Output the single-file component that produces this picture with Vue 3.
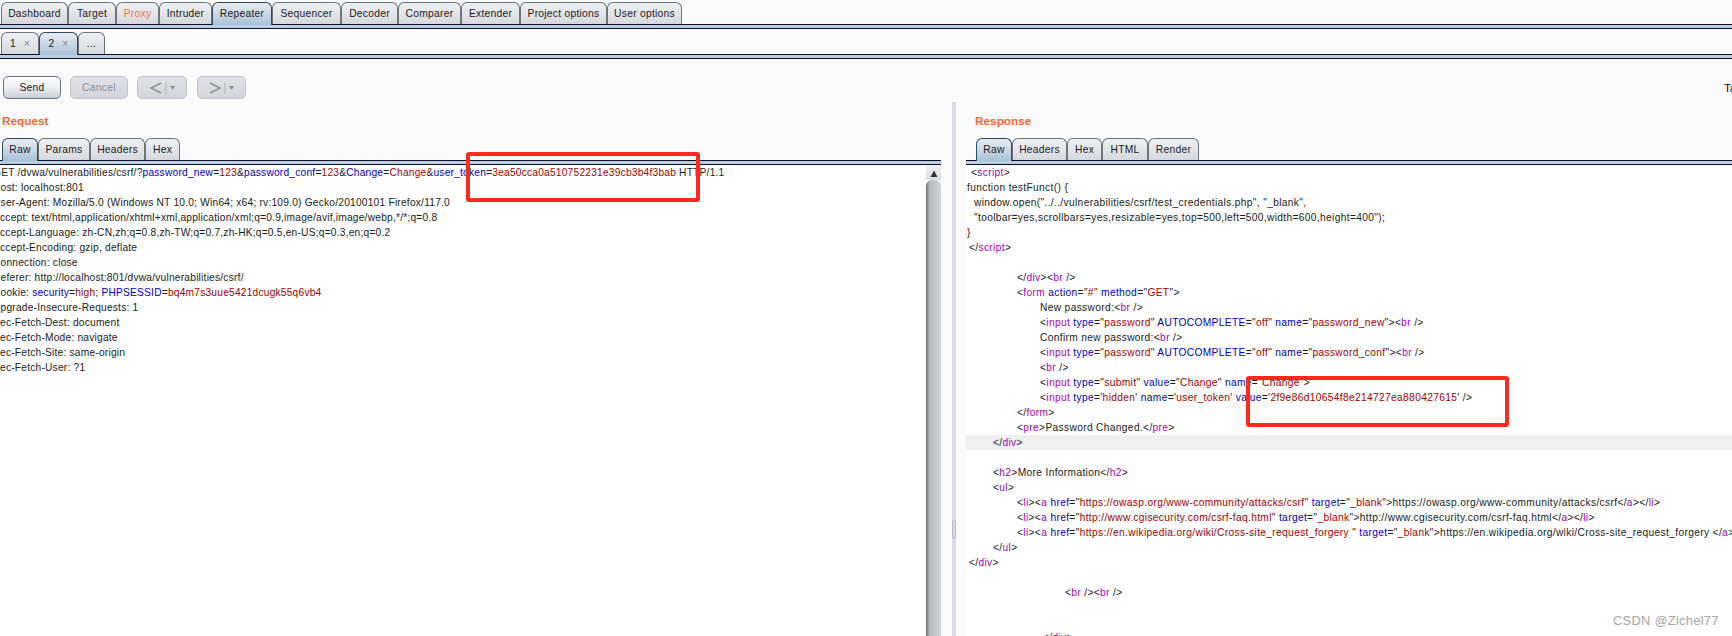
<template>
  <div class="burp">
    <div class="main-tabs">
      <div
        v-for="tab in mainTabs"
        :key="tab.name"
        class="tab"
        :class="{ active: tab.name === 'Repeater', proxy: tab.name === 'Proxy' }"
        :style="{ width: tab.w + 'px' }"
      >{{ tab.name }}</div>
    </div>
    <div class="band"></div>

    <div class="sub-tabs">
      <div class="tab sub" style="width: 38px"><span>1</span><i>×</i></div>
      <div class="tab active sub" style="width: 39px"><span>2</span><i>×</i></div>
      <div class="tab sub" style="width: 27px"><span>...</span></div>
    </div>
    <div class="band"></div>

    <div class="toolbar">
      <button class="btn send">Send</button>
      <button class="btn cancel off">Cancel</button>
      <button class="btn nav back off">
        <svg width="50" height="23" viewBox="0 0 50 23">
          <path d="M24 7 L14 12 L24 17" fill="none" stroke="#8d9097" stroke-width="1.4" />
          <path d="M29 6 V18" stroke="#b0b3ba" stroke-width="1" />
          <path d="M33 10 H38 L35.5 14 Z" fill="#8d9097" />
        </svg>
      </button>
      <button class="btn nav forward off">
        <svg width="49" height="23" viewBox="0 0 49 23">
          <path d="M13 7 L23 12 L13 17" fill="none" stroke="#8d9097" stroke-width="1.4" />
          <path d="M28 6 V18" stroke="#b0b3ba" stroke-width="1" />
          <path d="M32 10 H37 L34.5 14 Z" fill="#8d9097" />
        </svg>
      </button>
      <span class="target">Target: http://localhost:801</span>
    </div>

    <div class="panes">
      <section class="pane req">
        <h2 class="req-title">Request</h2>
        <div class="pane-tabs">
          <div
            v-for="(tab, i) in reqTabs"
            :key="tab.name"
            class="tab"
            :class="{ active: i === 0 }"
            :style="{ width: tab.w + 'px' }"
          >{{ tab.name }}</div>
        </div>
        <div class="band"></div>
        <div class="editor-row">
          <div class="editor req-editor">
            <div v-for="(line, i) in reqLines" :key="i" class="line">
              <span v-for="(s, j) in line" :key="j" :class="s[1]">{{ s[0] }}</span>
            </div>
          </div>
          <div class="scrollbar">
            <div class="arrow"><svg width="14" height="15" viewBox="0 0 14 15"><path d="M7 5.5 L10.5 12 H3.5 Z" fill="#333" /></svg></div>
            <div class="thumb"></div>
          </div>
        </div>
      </section>

      <div class="splitter"><div class="grip"></div></div>

      <section class="pane resp">
        <h2 class="resp-title">Response</h2>
        <div class="pane-tabs resp-tabs">
          <div
            v-for="(tab, i) in respTabs"
            :key="tab.name"
            class="tab"
            :class="{ active: i === 0 }"
            :style="{ width: tab.w + 'px' }"
          >{{ tab.name }}</div>
        </div>
        <div class="band"></div>
        <div class="editor">
          <div
            v-for="(line, i) in respLines"
            :key="i"
            class="line"
            :class="{ current: i === 18 }"
            :style="{ paddingLeft: line.x + 'px' }"
          >
            <span v-for="(s, j) in line.segs" :key="j" :class="s[1]">{{ s[0] }}</span>
          </div>
        </div>
      </section>
    </div>

    <!-- annotations drawn on top of the screenshot -->
    <div class="mark mark-req"></div>
    <div class="mark mark-resp"></div>
    <div class="watermark">CSDN @Zichel77</div>
  </div>
</template>

<script setup>
const mainTabs = [
  { name: 'Dashboard', w: 67 },
  { name: 'Target', w: 48 },
  { name: 'Proxy', w: 43 },
  { name: 'Intruder', w: 53 },
  { name: 'Repeater', w: 60 },
  { name: 'Sequencer', w: 69 },
  { name: 'Decoder', w: 57 },
  { name: 'Comparer', w: 63 },
  { name: 'Extender', w: 59 },
  { name: 'Project options', w: 87 },
  { name: 'User options', w: 75 }
]
const reqTabs = [
  { name: 'Raw', w: 36 },
  { name: 'Params', w: 52 },
  { name: 'Headers', w: 55 },
  { name: 'Hex', w: 35 }
]
const respTabs = [
  { name: 'Raw', w: 36 },
  { name: 'Headers', w: 55 },
  { name: 'Hex', w: 35 },
  { name: 'HTML', w: 46 },
  { name: 'Render', w: 51 }
]

const reqLines = [
  [
    ['GET /dvwa/vulnerabilities/csrf/?'],
    ['password_new', 'k'], ['='], ['123', 'v'], ['&'],
    ['password_conf', 'k'], ['='], ['123', 'v'], ['&'],
    ['Change', 'k'], ['='], ['Change', 'v'], ['&'],
    ['user_token', 'k'], ['='], ['3ea50cca0a510752231e39cb3b4f3bab', 'v'],
    [' HTTP/1.1']
  ],
  [['Host: localhost:801']],
  [['User-Agent: Mozilla/5.0 (Windows NT 10.0; Win64; x64; rv:109.0) Gecko/20100101 Firefox/117.0']],
  [['Accept: text/html,application/xhtml+xml,application/xml;q=0.9,image/avif,image/webp,*/*;q=0.8']],
  [['Accept-Language: zh-CN,zh;q=0.8,zh-TW;q=0.7,zh-HK;q=0.5,en-US;q=0.3,en;q=0.2']],
  [['Accept-Encoding: gzip, deflate']],
  [['Connection: close']],
  [['Referer: http://localhost:801/dvwa/vulnerabilities/csrf/']],
  [
    ['Cookie: '], ['security', 'k'], ['='], ['high', 'v'], ['; '],
    ['PHPSESSID', 'k'], ['='], ['bq4m7s3uue5421dcugk55q6vb4', 'v']
  ],
  [['Upgrade-Insecure-Requests: 1']],
  [['Sec-Fetch-Dest: document']],
  [['Sec-Fetch-Mode: navigate']],
  [['Sec-Fetch-Site: same-origin']],
  [['Sec-Fetch-User: ?1']]
]

// small html highlighter, same colours as the message editor
const highlight = (src) => {
  const re = /(<\/?)(\w+)|(\w+)(?==["'])|(["'])(.*?)\4/g
  const out = []
  let last = 0
  let m
  while ((m = re.exec(src))) {
    if (m.index > last) out.push([src.slice(last, m.index)])
    if (m[2]) {
      out.push([m[1]], [m[2], 't'])
    } else if (m[3]) {
      out.push([m[3], 'k'])
    } else {
      out.push([m[4]], [m[5], 'v'], [m[4]])
    }
    last = re.lastIndex
  }
  if (last < src.length) out.push([src.slice(last)])
  return out
}

const respSource = [
  [5, '<script>'],
  [1, 'function testFunct() {', true],
  [8, 'window.open("../../vulnerabilities/csrf/test_credentials.php", "_blank",', true],
  [8, '"toolbar=yes,scrollbars=yes,resizable=yes,top=500,left=500,width=600,height=400");', true],
  [1, '}', true],
  [3, '<\/script>'],
  [0, ''],
  [51, '</div><br />'],
  [51, '<form action="#" method="GET">'],
  [74, 'New password:<br />'],
  [74, '<input type="password" AUTOCOMPLETE="off" name="password_new"><br />'],
  [74, 'Confirm new password:<br />'],
  [74, '<input type="password" AUTOCOMPLETE="off" name="password_conf"><br />'],
  [74, '<br />'],
  [74, '<input type="submit" value="Change" name="Change">'],
  [74, "<input type='hidden' name='user_token' value='2f9e86d10654f8e214727ea880427615' />"],
  [51, '</form>'],
  [51, '<pre>Password Changed.</pre>'],
  [27, '</div>'],
  [0, ''],
  [27, '<h2>More Information</h2>'],
  [27, '<ul>'],
  [51, '<li><a href="https://owasp.org/www-community/attacks/csrf" target="_blank">https://owasp.org/www-community/attacks/csrf</a></li>'],
  [51, '<li><a href="http://www.cgisecurity.com/csrf-faq.html" target="_blank">http://www.cgisecurity.com/csrf-faq.html</a></li>'],
  [51, '<li><a href="https://en.wikipedia.org/wiki/Cross-site_request_forgery " target="_blank">https://en.wikipedia.org/wiki/Cross-site_request_forgery </a></li>'],
  [27, '</ul>'],
  [3, '</div>'],
  [0, ''],
  [99, '<br /><br />'],
  [0, ''],
  [0, ''],
  [77, '</div>']
]

const respLines = respSource.map(([x, src, plain]) => ({
  x,
  segs: plain ? [[src]] : highlight(src)
}))
</script>

<style>
html,
body {
  margin: 0;
  overflow: hidden;
}
</style>

<style scoped>
.burp {
  position: relative;
  display: flex;
  flex-direction: column;
  width: 1732px;
  height: 636px;
  overflow: hidden;
  background: #fbfbfb;
  color: #1c1c1c;
  font-family: "Liberation Sans", Arial, sans-serif;
  font-size: 10.3px;
}

.main-tabs {
  display: flex;
  flex: none;
  height: 24px;
  padding: 2px 0 0 1px;
  box-sizing: border-box;
}

.tab {
  display: flex;
  align-items: center;
  justify-content: center;
  gap: 8px;
  flex: none;
  box-sizing: border-box;
  height: 22px;
  border: 1px solid #6f747c;
  border-bottom: 0;
  border-radius: 6px 6px 0 0;
  background: linear-gradient(#eff0f3, #d6d8df);
  letter-spacing: 0.25px;
  white-space: nowrap;
}

.tab.active {
  position: relative;
  height: 23px;
  margin-bottom: -1px;
  padding-bottom: 1px;
  border-color: #2e4a63;
  background: linear-gradient(#e4e9ef 10%, #a9c1d7);
}

.tab.proxy {
  color: #f0734a;
}

.sub-tabs {
  display: flex;
  flex: none;
  height: 25px;
  padding: 3px 0 0 1px;
  box-sizing: border-box;
}

.sub i {
  color: #888;
  font-style: normal;
}

.band {
  flex: none;
  box-sizing: border-box;
  height: 5px;
  border-top: 1px solid #0c1020;
  border-bottom: 1px solid #0c1020;
  background: #b9cde3;
}

.toolbar {
  display: flex;
  flex: none;
  align-items: center;
  height: 23px;
  margin-top: 17px;
  padding-left: 3px;
}

.btn {
  flex: none;
  box-sizing: border-box;
  height: 23px;
  padding: 0;
  border: 1px solid #6b7480;
  border-radius: 5px;
  background: linear-gradient(#fbfbfc, #f0f1f4 45%, #c9ccd5);
  color: #1c1c1c;
  font: inherit;
  letter-spacing: 0.3px;
}

.btn.off {
  border-color: #c0c3ca;
  background: linear-gradient(#dfe1e6, #d3d5dc);
  color: #8d9097;
}

.send {
  width: 58px;
}

.cancel {
  width: 58px;
  margin-left: 9px;
}

.nav {
  display: flex;
}

.nav svg {
  margin: -1px;
}

.back {
  width: 50px;
  margin-left: 9px;
}

.forward {
  width: 49px;
  margin-left: 10px;
}

.target {
  flex: none;
  margin-left: 1478px;
  color: #111;
  font-size: 11.5px;
  white-space: nowrap;
}

.panes {
  display: flex;
  flex: 1;
  min-height: 0;
  margin-top: 3px;
}

.pane {
  display: flex;
  flex-direction: column;
  flex: none;
  min-height: 0;
}

.req {
  width: 941px;
}

.resp {
  width: 766px;
}

h2 {
  flex: none;
  height: 15px;
  margin: 12px 0 0;
  color: #ff6633;
  font-size: 11.8px;
  font-weight: 700;
  line-height: 15px;
}

.req-title {
  padding-left: 2px;
}

.resp-title {
  padding-left: 9px;
}

.pane-tabs {
  display: flex;
  flex: none;
  height: 22px;
  margin-top: 9px;
  padding-left: 2px;
}

.resp-tabs {
  padding-left: 10px;
}

.editor-row {
  display: flex;
  flex: 1;
  min-height: 0;
}

.editor {
  flex: 1;
  min-width: 0;
  overflow: hidden;
  background: #fff;
  font-size: 10.2px;
  letter-spacing: 0.35px;
}

.req-editor {
  letter-spacing: 0.22px;
}

.line {
  box-sizing: border-box;
  height: 15px;
  line-height: 15px;
  white-space: pre;
}

.req-editor .line {
  margin-left: -7px;
}

.line.current {
  background: #f0f0f0;
}

.k {
  color: #0000c8;
}

.v {
  color: #a80000;
}

.t {
  color: #b000b8;
}

.scrollbar {
  flex: none;
  display: flex;
  flex-direction: column;
  width: 15px;
  background: #fff;
}

.arrow {
  flex: none;
  height: 15px;
  padding-left: 1px;
  background: linear-gradient(#f4f4f6, #dcdde2);
}

.thumb {
  flex: 1;
  border-radius: 6px 6px 0 0;
  background: linear-gradient(90deg, #6c6e74, #b9bbc3 25%, #d2d4dc);
}

.splitter {
  display: flex;
  align-items: flex-start;
  flex: none;
  box-sizing: border-box;
  width: 4px;
  margin: 0 10px 0 11px;
  background: #d8dce6;
}

.grip {
  width: 4px;
  height: 19px;
  margin-top: 418px;
  box-sizing: border-box;
  border: 1px solid #b8bcc8;
  border-radius: 2px;
}

.mark {
  position: absolute;
  box-sizing: border-box;
  border: 4px solid #ff2a1f;
  border-radius: 3px;
}

.mark-req {
  left: 466px;
  top: 152px;
  width: 234px;
  height: 50px;
}

.mark-resp {
  left: 1246px;
  top: 376px;
  width: 263px;
  height: 51px;
}

.watermark {
  position: absolute;
  left: 1613px;
  top: 613px;
  color: #a8a8a8;
  font-size: 13px;
  letter-spacing: 0.2px;
  line-height: 16px;
  white-space: nowrap;
}
</style>
